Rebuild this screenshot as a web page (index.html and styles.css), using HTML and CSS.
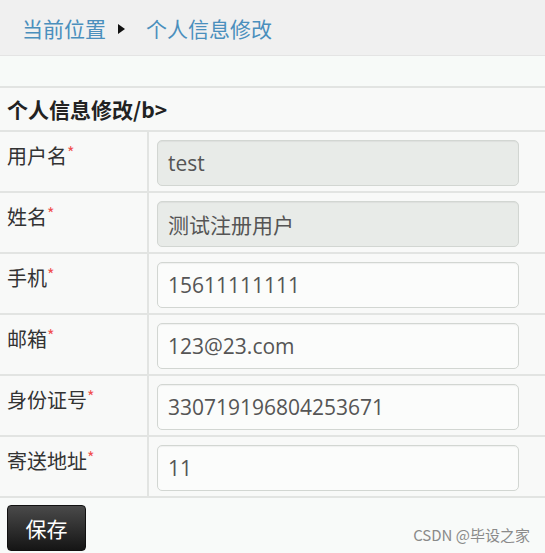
FILE: index.html
```html
<!DOCTYPE html>
<html lang="zh">
<head>
<meta charset="utf-8">
<link rel="stylesheet" href="styles.css">
</head>
<body>
<div class="page">
  <div class="crumb">
    <span class="crumb-link">当前位置</span>
    <span class="crumb-arrow"></span>
    <span class="crumb-link">个人信息修改</span>
  </div>
  <div class="band"></div>
  <table class="form">
    <tr><th colspan="2" class="title">个人信息修改/b&gt;</th></tr>
    <tr>
      <td class="label">用户名<span class="req">*</span></td>
      <td class="field"><div class="input ro">test</div></td>
    </tr>
    <tr>
      <td class="label">姓名<span class="req">*</span></td>
      <td class="field"><div class="input ro">测试注册用户</div></td>
    </tr>
    <tr>
      <td class="label">手机<span class="req">*</span></td>
      <td class="field"><div class="input">15611111111</div></td>
    </tr>
    <tr>
      <td class="label">邮箱<span class="req">*</span></td>
      <td class="field"><div class="input">123@23.com</div></td>
    </tr>
    <tr>
      <td class="label">身份证号<span class="req">*</span></td>
      <td class="field"><div class="input">330719196804253671</div></td>
    </tr>
    <tr>
      <td class="label">寄送地址<span class="req">*</span></td>
      <td class="field"><div class="input">11</div></td>
    </tr>
  </table>
  <div class="actions">
    <button class="btn">保存</button>
  </div>
  <div class="watermark">CSDN @毕设之家</div>
</div>
</body>
</html>
```
FILE: styles.css
```css
html, body {
  margin: 0;
  padding: 0;
  background: #f8faf9;
}
.page {
  position: relative;
  width: 545px;
  height: 553px;
  overflow: hidden;
  font-family: "Open Sans", "Noto Sans CJK SC", sans-serif;
  color: #333;
}
.crumb {
  height: 56px;
  background: #f0f0f0;
  border-bottom: 1px solid #e4e4e4;
  display: flex;
  align-items: center;
  padding-left: 22px;
  box-sizing: border-box;
}
.crumb-link {
  font-family: "Noto Sans CJK SC", sans-serif;
  font-size: 21px;
  color: #4a8fbd;
}
.crumb-arrow {
  width: 0;
  height: 0;
  border-top: 5px solid transparent;
  border-bottom: 5px solid transparent;
  border-left: 7px solid #111;
  margin: 2px 21px 0 12px;
}
.band {
  height: 30px;
  background: #f7faf8;
  border-bottom: 2px solid #e2e4e2;
}
.form {
  width: 100%;
  border-collapse: collapse;
  background: #f8f9f8;
}
.form th, .form td {
  border-bottom: 2px solid #e2e4e2;
  padding: 0;
}
.title {
  height: 42px;
  text-align: left;
  padding-left: 7px !important;
  font-family: "Noto Sans CJK SC", sans-serif;
  font-size: 21px;
  font-weight: bold;
  color: #222;
}
.label {
  width: 140px;
  vertical-align: top;
  padding: 8px 0 0 7px !important;
  border-right: 2px solid #e2e4e2;
  font-family: "Noto Sans CJK SC", sans-serif;
  font-size: 20px;
  color: #333;
}
.req {
  color: #f05050;
  font-size: 16px;
  vertical-align: 5px;
}
.field {
  padding: 8px 0 5px 8px !important;
}
.input {
  width: 362px;
  height: 46px;
  box-sizing: border-box;
  border: 1px solid #d2d6d2;
  border-radius: 5px;
  background: #fbfcfb;
  padding-left: 10px;
  display: flex;
  align-items: center;
  font-size: 21px;
  color: #555;
  box-shadow: inset 0 1px 1px rgba(0,0,0,0.05);
}
.input.ro {
  background: #e8ebe8;
}
.actions {
  padding: 7px 0 0 7px;
}
.btn {
  width: 79px;
  height: 46px;
  border: 1px solid #111;
  border-radius: 4px;
  background: linear-gradient(#4a4a4a, #151515);
  color: #fff;
  font-family: "Noto Sans CJK SC", sans-serif;
  font-size: 21px;
  padding: 0;
}
.watermark {
  position: absolute;
  right: 15px;
  bottom: 8px;
  font-family: "Noto Sans CJK SC", sans-serif;
  font-size: 15px;
  color: #8a8a8a;
}
```
